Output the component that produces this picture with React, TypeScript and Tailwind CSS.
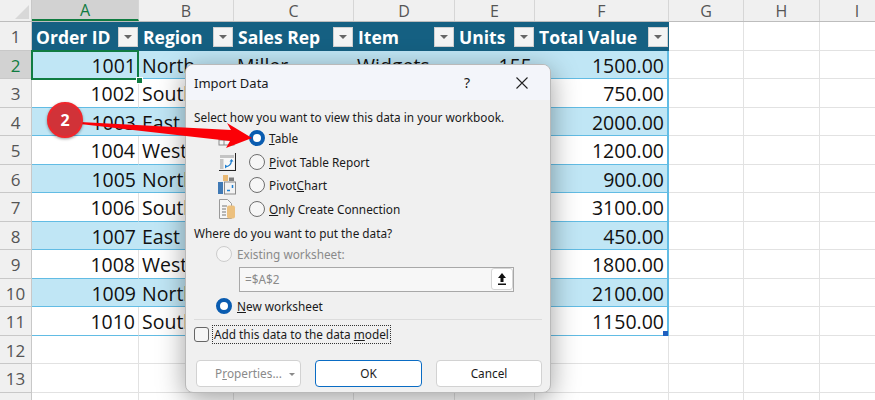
const columns = [
  { name: 'A', width: 'w-[107px]' },
  { name: 'B', width: 'w-[95px]' },
  { name: 'C', width: 'w-[120px]' },
  { name: 'D', width: 'w-[101px]' },
  { name: 'E', width: 'w-[80px]' },
  { name: 'F', width: 'w-[134px]' },
  { name: 'G', width: 'w-[75px]' },
  { name: 'H', width: 'w-[76px]' },
  { name: 'I', width: 'w-[75px]' },
]

const headers = ['Order ID', 'Region', 'Sales Rep', 'Item', 'Units', 'Total Value']

const rows = [
  { id: 1001, region: 'North', rep: 'Miller', item: 'Widgets', units: 155, total: '1500.00' },
  { id: 1002, region: 'South', rep: '', item: '', units: '', total: '750.00' },
  { id: 1003, region: 'East', rep: '', item: '', units: '', total: '2000.00' },
  { id: 1004, region: 'West', rep: '', item: '', units: '', total: '1200.00' },
  { id: 1005, region: 'North', rep: '', item: '', units: '', total: '900.00' },
  { id: 1006, region: 'South', rep: '', item: '', units: '', total: '3100.00' },
  { id: 1007, region: 'East', rep: '', item: '', units: '', total: '450.00' },
  { id: 1008, region: 'West', rep: '', item: '', units: '', total: '1800.00' },
  { id: 1009, region: 'North', rep: '', item: '', units: '', total: '2100.00' },
  { id: 1010, region: 'South', rep: '', item: '', units: '', total: '1150.00' },
]

function FilterButton() {
  return (
    <div className="w-[20px] h-[20px] shrink-0 bg-[#f4f4f4] border border-[#d0d0d0] flex items-center justify-center">
      <div className="w-0 h-0 border-x-[4px] border-x-transparent border-t-[4px] border-t-[#666666]" />
    </div>
  )
}

function HeaderRow() {
  return (
    <div className="flex h-[28.5px]">
      <RowNumber n={1} />
      {columns.slice(0, 6).map((col, i) => (
        <div key={col.name} className={`${col.width} shrink-0 bg-[#156082] flex items-center justify-between pl-[4px] pr-[1px] pt-[2px] overflow-hidden`}>
          <span className="text-white font-bold text-[17.5px] leading-none whitespace-nowrap">{headers[i]}</span>
          <FilterButton />
        </div>
      ))}
      {columns.slice(6).map(col => (
        <div key={col.name} className={`${col.width} shrink-0 border-r border-b border-[#e2e2e2]`} />
      ))}
    </div>
  )
}

function RowNumber({ n, active }: { n?: number; active?: boolean }) {
  return (
    <div className={`w-[32px] shrink-0 border-r border-b border-[#c8c8c8] flex items-center justify-center pt-[2px] leading-none text-[17px] ${active ? 'bg-[#d2d2d2] text-[#107c41]' : 'bg-[#f0f0f0] text-[#555555]'}`}>
      {n}
    </div>
  )
}

function DataRow({ row, n }: { row: typeof rows[number]; n: number }) {
  const band = n % 2 === 0
  const cell = `h-full shrink-0 flex items-center px-[3px] pt-[2px] text-[19.5px] leading-none text-[#111111] whitespace-nowrap overflow-hidden border-b border-b-[#62bce4] ${band ? 'bg-[#c0e6f5]' : 'bg-white border-r border-r-[#e2e2e2]'}`
  return (
    <div className="flex h-[28.5px]">
      <RowNumber n={n} active={n === 2} />
      <div className={`w-[107px] justify-end ${cell}`}>{row.id}</div>
      <div className={`w-[95px] ${cell}`}>{row.region}</div>
      <div className={`w-[120px] ${cell}`}>{row.rep}</div>
      <div className={`w-[101px] ${cell}`}>{row.item}</div>
      <div className={`w-[80px] justify-end ${cell}`}>{row.units}</div>
      <div className={`w-[134px] justify-end border-r-2 !border-r-[#62bce4] ${cell}`}>{row.total}</div>
      <div className="w-[75px] shrink-0 border-r border-b border-[#e2e2e2]" />
      <div className="w-[76px] shrink-0 border-r border-b border-[#e2e2e2]" />
      <div className="w-[75px] shrink-0 border-b border-[#e2e2e2]" />
    </div>
  )
}

function EmptyRow({ n }: { n?: number }) {
  return (
    <div className="flex h-[28.5px]">
      <RowNumber n={n} />
      {columns.map(col => (
        <div key={col.name} className={`${col.width} shrink-0 border-r border-b border-[#e2e2e2]`} />
      ))}
    </div>
  )
}

function Radio({ checked, disabled }: { checked?: boolean; disabled?: boolean }) {
  if (checked) {
    return <div className="w-[16px] h-[16px] shrink-0 rounded-full border-[4px] border-[#0a5cb0] bg-white" />
  }
  return <div className={`w-[16px] h-[16px] shrink-0 rounded-full border bg-[#f6f6f6] ${disabled ? 'border-[#cccccc]' : 'border-[#6e6e6e]'}`} />
}

function TableIcon() {
  return (
    <svg width="20" height="20" viewBox="0 0 20 20" className="shrink-0">
      <rect x="2" y="3" width="15" height="14" fill="#f4f4f4" stroke="#8a8a8a" />
      <path d="M2 8h15M2 12h15M7 3v14" stroke="#8a8a8a" />
    </svg>
  )
}

function PivotIcon() {
  return (
    <svg width="20" height="20" viewBox="0 0 20 20" className="shrink-0">
      <path d="M2 18.500h17M18.500 18.500V1" stroke="#222222" strokeWidth="1" fill="none" />
      <rect x="3" y="3" width="14" height="14" fill="#f8f8f8" />
      <rect x="3" y="3" width="14" height="3" fill="#c4c4c4" />
      <rect x="3" y="7" width="3.500" height="10" fill="#c4c4c4" />
      <path d="M8.500 14.500c3 0 5.500-2 6-5.500" stroke="#1f7fd0" strokeWidth="1.300" fill="none" />
      <path d="M8 12.500v4l2.500-2zM12.500 9.500h4L14.500 7z" fill="#1f7fd0" />
    </svg>
  )
}

function PivotChartIcon() {
  return (
    <svg width="20" height="22" viewBox="0 0 20 22" className="shrink-0">
      <rect x="6" y="1" width="5" height="6" fill="#e9b872" />
      <rect x="12" y="3.500" width="5" height="3.500" fill="#7d7d7d" />
      <rect x="1" y="8" width="5" height="12" fill="#3f79b5" />
      <rect x="7.500" y="8" width="11" height="12" fill="#f3f3f3" stroke="#8a8a8a" />
      <path d="M10 16.500h3M15.500 11v3" stroke="#1f7fd0" strokeWidth="1.500" />
    </svg>
  )
}

function ConnectionIcon() {
  return (
    <svg width="20" height="22" viewBox="0 0 20 22" className="shrink-0">
      <path d="M2.500 1.500h8l4 4v15h-12z" fill="#f6f6f6" stroke="#9a9a9a" />
      <path d="M5 8h5M5 11h4M5 14h4M5 17h4" stroke="#777777" />
      <rect x="10" y="7.500" width="8" height="13" rx="2" fill="#ecc07e" />
    </svg>
  )
}

function OptionRow({ icon, children, checked }: { icon: React.ReactNode; children: React.ReactNode; checked?: boolean }) {
  return (
    <div className="flex items-center h-[23.7px]">
      <div className="w-[20px] ml-[23px] mr-[12px] flex justify-center">{icon}</div>
      <Radio checked={checked} />
      <span className="ml-[4px]">{children}</span>
    </div>
  )
}

function DialogButton({ children, primary, muted, className }: { children: React.ReactNode; primary?: boolean; muted?: boolean; className: string }) {
  return (
    <div className={`h-[27px] rounded-[4px] bg-white border flex items-center justify-center ${primary ? 'border-[#0a6cc4]' : 'border-[#d2d2d2]'} ${muted ? 'text-[#8a8a8a]' : 'text-[#1a1a1a]'} ${className}`}>
      {children}
    </div>
  )
}

function ImportDialog() {
  return (
    <div className="absolute left-[185px] top-[64px] w-[366px] h-[329px] rounded-[8px] bg-[#f0f0f0] border border-[#b9b9b9] shadow-[0_6px_28px_rgba(0,0,0,0.38)] overflow-hidden text-[11.8px] leading-[16px] text-[#1a1a1a] font-['Noto_Sans',sans-serif] flex flex-col">
      <div className="h-[35px] shrink-0 bg-[#f3f5fa] flex items-center pl-[8px]">
        <span className="text-[13px] flex-1">Import Data</span>
        <span className="text-[14px] mr-[46px]">?</span>
        <svg width="12" height="12" viewBox="0 0 12 12" className="mr-[22px]">
          <path d="M0.500 0.500l11 11M11.500 0.500l-11 11" stroke="#222222" strokeWidth="1.100" />
        </svg>
      </div>
      <div className="flex-1 flex flex-col px-[8px] pt-[9px]">
        <div className="h-[16px]">Select how you want to view this data in your workbook.</div>
        <div className="mt-[1px]">
          <OptionRow icon={<TableIcon />} checked><u>T</u>able</OptionRow>
          <OptionRow icon={<PivotIcon />}><u>P</u>ivot Table Report</OptionRow>
          <OptionRow icon={<PivotChartIcon />}>Pivot<u>C</u>hart</OptionRow>
          <OptionRow icon={<ConnectionIcon />}><u>O</u>nly Create Connection</OptionRow>
        </div>
        <div className="mt-[4px] h-[16px]">Where do you want to put the data?</div>
        <div className="flex items-center gap-[5px] ml-[22px] mt-[5px] h-[16px] text-[#8a8a8a]">
          <Radio disabled />
          <span>Existing worksheet:</span>
        </div>
        <div className="ml-[45px] mt-[5px] w-[275px] h-[25px] bg-[#f7f7f7] border border-[#a8a8a8] flex items-center justify-between text-[#8a8a8a] pl-[5px]">
          <span>=$A$2</span>
          <div className="w-[22px] h-[22px] rounded-[3px] bg-white border border-[#d5d5d5] flex items-center justify-center">
            <svg width="10" height="14" viewBox="0 0 10 14">
              <path d="M5 1L9 6H6.500V10H3.500V6H1z" fill="#111111" />
              <rect x="1" y="11.500" width="8" height="1.500" fill="#111111" />
            </svg>
          </div>
        </div>
        <div className="flex items-center gap-[5px] ml-[22px] mt-[6px] h-[16px]">
          <Radio checked />
          <span><u>N</u>ew worksheet</span>
        </div>
        <div className="h-px bg-[#dcdcdc] mt-[5px]" />
        <div className="flex items-center mt-[5px] h-[19px]">
          <div className="w-[15px] h-[15px] rounded-[3px] border border-[#666666] bg-[#f6f6f6]" />
          <div className="ml-[3px] px-[1px] h-[19px] leading-[17px] border border-dotted border-[#333333] whitespace-nowrap">
            <span>Add this data to the data <u>m</u>odel</span>
          </div>
        </div>
        <div className="flex mt-[16px] ml-[2px]">
          <DialogButton muted className="w-[105px] relative">
            <span>P<u>r</u>operties...</span>
            <span className="absolute right-[5px] top-[12px] w-0 h-0 border-x-[3px] border-x-transparent border-t-[3px] border-t-[#8a8a8a]" />
          </DialogButton>
          <DialogButton primary className="w-[107px] ml-[14px]">OK</DialogButton>
          <DialogButton className="w-[106px] ml-[14px]">Cancel</DialogButton>
        </div>
      </div>
    </div>
  )
}

export default function App() {
  return (
    <div className="relative w-[875px] h-[400px] overflow-hidden bg-white font-['Open_Sans',sans-serif]">
      <div className="flex h-[22px] bg-[#f0f0f0] border-b border-[#bdbdbd]">
        <div className="w-[32px] shrink-0 border-r border-[#c8c8c8] relative">
          <div className="absolute right-[2px] bottom-[2px] w-0 h-0 border-l-[14px] border-l-transparent border-b-[14px] border-b-[#d8d8d8]" />
        </div>
        {columns.map((col, i) => (
          <div key={col.name} className={`${col.width} shrink-0 flex items-center justify-center text-[16px] leading-none border-r border-[#d6d6d6] ${i === 0 ? 'bg-[#d2d2d2] text-[#107c41] border-b-2 border-b-[#107c41]' : 'text-[#555555]'}`}>
            {col.name}
          </div>
        ))}
      </div>
      <HeaderRow />
      {rows.map((row, i) => <DataRow key={row.id} row={row} n={i + 2} />)}
      <EmptyRow n={12} />
      <EmptyRow n={13} />
      <EmptyRow />

      {/* selected cell */}
      <div className="absolute left-[31px] top-[50px] w-[108px] h-[30px] border-2 border-[#107c41]" />
      <div className="absolute left-[136px] top-[77px] w-[5px] h-[5px] bg-[#107c41] border border-white box-content" />
      {/* table resize handle */}
      <div className="absolute left-[663px] top-[331px] w-[5px] h-[5px] bg-[#1f5fbf]" />

      <ImportDialog />

      {/* callout */}
      <svg width="875" height="400" viewBox="0 0 875 400" className="absolute left-0 top-0 pointer-events-none">
        <polygon points="80,122 231,130 227,123 252,138 226,148 230,141 80,124" fill="#fb0007" />
      </svg>
      <div className="absolute left-[47px] top-[102px] w-[36px] h-[36px] rounded-full bg-[#d13238] border-2 border-[#f0262c] shadow-[0_1px_3px_rgba(0,0,0,0.4)] flex items-center justify-center text-white font-bold text-[16px]">
        2
      </div>
    </div>
  )
}
